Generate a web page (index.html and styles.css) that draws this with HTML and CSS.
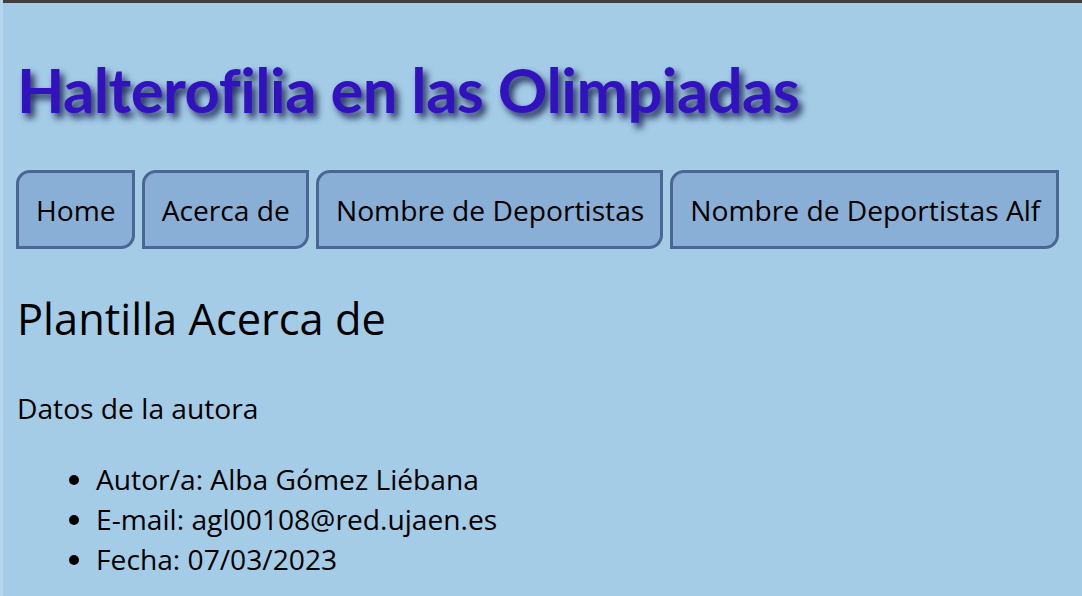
FILE: index.html
```html
<!DOCTYPE html>
<html lang="es">
<head>
<meta charset="utf-8">
<title>Acerca de</title>
<link rel="stylesheet" href="styles.css">
</head>
<body>
<div class="topbar"></div>
<div class="page">
  <header class="header">
    <h1 class="title">Halterofilia en las Olimpiadas</h1>
  </header>
  <nav class="menu">
    <a class="tab" href="#">Home</a>
    <a class="tab" href="#">Acerca de</a>
    <a class="tab" href="#">Nombre de Deportistas</a>
    <a class="tab" href="#">Nombre de Deportistas Alf</a>
  </nav>
  <main class="content">
    <h2 class="subtitle">Plantilla Acerca de</h2>
    <p class="text">Datos de la autora</p>
    <ul class="list">
      <li>Autor/a: Alba Gómez Liébana</li>
      <li>E-mail: agl00108@red.ujaen.es</li>
      <li>Fecha: 07/03/2023</li>
    </ul>
  </main>
</div>
</body>
</html>
```

FILE: styles.css
```css
html {
  background: #a4cce7;
}
body {
  margin: 0;
  font-family: "Open Sans", "Lato", sans-serif;
  color: #000;
  border-left: 3px solid #b4d6ee;
  min-height: 596px;
  box-sizing: border-box;
}
.topbar {
  height: 3px;
  background: #3f3f41;
}
.page {
  padding: 0 13px;
}
.header {
  padding-top: 46px;
}
.title {
  margin: 0 0 0 1px;
  font-family: "Lato", sans-serif;
  font-size: 61.5px;
  line-height: 80px;
  font-weight: 700;
  color: #3212be;
  text-shadow: 4px 5px 7px #1d2a55;
  letter-spacing: -0.5px;
}
.menu {
  display: flex;
  gap: 7px;
  margin-top: 41px;
}
.tab {
  display: flex;
  align-items: center;
  height: 79px;
  box-sizing: border-box;
  padding: 0 16px 0 17px;
  background: #8aafd6;
  border: 3px solid #4a6792;
  border-radius: 14px 0 14px 0;
  color: #000;
  text-decoration: none;
  font-size: 28.2px;
}
.content {
  padding-top: 40px;
  padding-left: 1px;
}
.subtitle {
  margin: 0;
  font-size: 43.4px;
  font-weight: 400;
  line-height: 60px;
}
.text {
  margin: 39px 0 0;
  font-size: 28.2px;
  line-height: 40px;
}
.list {
  margin: 31px 0 0;
  padding-left: 79px;
  font-size: 28.2px;
  line-height: 40px;
}
```
